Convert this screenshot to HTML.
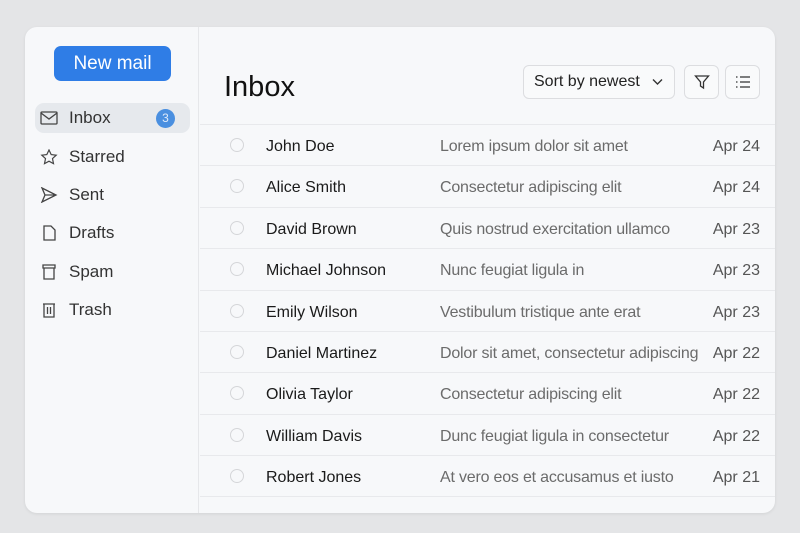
<!DOCTYPE html>
<html><head><meta charset="utf-8"><style>
*{margin:0;padding:0;box-sizing:border-box}
body{width:800px;height:533px;background:#e4e5e7;font-family:"Liberation Sans",sans-serif;position:relative;overflow:hidden}
.card{position:absolute;left:25px;top:27px;width:750px;height:486px;background:#f7f8fa;border-radius:12px;box-shadow:0 1px 3px rgba(0,0,0,.08);overflow:hidden}
.side{position:absolute;left:0;top:0;width:174px;height:486px;border-right:1px solid #e6e7ea}
.btn{position:absolute;left:29px;top:19px;width:117px;height:35px;background:#2f7de6;border-radius:7px;color:#fff;font-size:19px;text-align:center;line-height:35px}
.nav{position:absolute;left:10px;width:155px;height:30px;font-size:17px;color:#333;line-height:30px;padding-left:34px;border-radius:9px}
.nav svg{position:absolute;left:5px;top:7px}
.sel{background:#e6e9ed}
.badge{position:absolute;left:121px;top:6px;width:19px;height:19px;border-radius:50%;background:#4a8fe0;color:#dfeafa;font-size:12px;line-height:19px;text-align:center}
h1{position:absolute;left:199px;top:44px;font-weight:normal;font-size:29px;color:#111}
.sort{position:absolute;left:498px;top:38px;width:152px;height:34px;border:1px solid #dcdde0;border-radius:6px;font-size:16px;color:#222;line-height:32px;padding-left:10px;background:#f9fafb}
.ib{position:absolute;top:38px;width:35px;height:34px;border:1px solid #dcdde0;border-radius:6px;background:#f9fafb}
.row{position:absolute;left:175px;width:575px;height:41.4px;border-top:1px solid #e8e9ec;font-size:16px;line-height:44px}
.row i{position:absolute;left:30px;top:13px;width:14px;height:14px;border:1px solid #d5d6d9;border-radius:50%}
.n{position:absolute;left:66px;color:#1a1a1a}
.p{position:absolute;left:240px;color:#6b6b6b;letter-spacing:-0.2px}
.d{position:absolute;right:15px;color:#555}
</style></head><body><div class="card">
<div class="side">
<div class="btn">New mail</div>
<div class="nav sel" style="top:76px"><svg width="18" height="16" viewBox="0 0 18 16" fill="none" stroke="#444" stroke-width="1.3"><rect x="1" y="2" width="16" height="12" rx="1"/><path d="M1 3l8 6 8-6"/></svg>Inbox<span class="badge">3</span></div>
<div class="nav" style="top:115px"><svg width="18" height="16" viewBox="0 0 18 16" fill="none" stroke="#444" stroke-width="1.2"><path d="M9 1l2.2 4.6 5 .6-3.7 3.4 1 5L9 12.2 4.5 14.6l1-5L1.8 6.2l5-.6z"/></svg>Starred</div>
<div class="nav" style="top:153px"><svg width="18" height="16" viewBox="0 0 18 16" fill="none" stroke="#444" stroke-width="1.3"><path d="M2 1l14 7-14 7 3-7z M5 8h11"/></svg>Sent</div>
<div class="nav" style="top:191px"><svg width="18" height="16" viewBox="0 0 18 16" fill="none" stroke="#444" stroke-width="1.3"><path d="M4 1h7l4 4v10H4z"/></svg>Drafts</div>
<div class="nav" style="top:230px"><svg width="18" height="16" viewBox="0 0 18 16" fill="none" stroke="#444" stroke-width="1.3"><path d="M3 1h12v3H3z M4 4v11h10V4"/></svg>Spam</div>
<div class="nav" style="top:268px"><svg width="18" height="16" viewBox="0 0 18 16" fill="none" stroke="#444" stroke-width="1.3"><path d="M3 2h12 M4 2v13h10V2 M7.5 5v7 M10.5 5v7"/></svg>Trash</div>
</div>
<h1>Inbox</h1>
<div class="sort">Sort by newest<svg style="position:absolute;right:11px;top:12px" width="11" height="8" viewBox="0 0 11 8" fill="none" stroke="#333" stroke-width="1.4"><path d="M1 1.5l4.5 4.5 4.5-4.5"/></svg></div>
<div class="ib" style="left:659px"><svg style="position:absolute;left:9px;top:8px" width="16" height="16" viewBox="0 0 16 16" fill="none" stroke="#333" stroke-width="1.3"><path d="M1.5 2h13l-5 6v6l-3-2V8z"/></svg></div>
<div class="ib" style="left:700px"><svg style="position:absolute;left:9px;top:9px" width="16" height="14" viewBox="0 0 16 14" fill="none" stroke="#333" stroke-width="1.2"><path d="M1 2h1.5M1 7h1.5M1 12h1.5M5 2h10M5 7h10M5 12h10"/></svg></div>
<div class="row" style="top:97px"><i></i><span class="n">John Doe</span><span class="p">Lorem ipsum dolor sit amet</span><span class="d">Apr 24</span></div>
<div class="row" style="top:138.4px"><i></i><span class="n">Alice Smith</span><span class="p">Consectetur adipiscing elit</span><span class="d">Apr 24</span></div>
<div class="row" style="top:179.8px"><i></i><span class="n">David Brown</span><span class="p">Quis nostrud exercitation ullamco</span><span class="d">Apr 23</span></div>
<div class="row" style="top:221.2px"><i></i><span class="n">Michael Johnson</span><span class="p">Nunc feugiat ligula in</span><span class="d">Apr 23</span></div>
<div class="row" style="top:262.6px"><i></i><span class="n">Emily Wilson</span><span class="p">Vestibulum tristique ante erat</span><span class="d">Apr 23</span></div>
<div class="row" style="top:304px"><i></i><span class="n">Daniel Martinez</span><span class="p">Dolor sit amet, consectetur adipiscing</span><span class="d">Apr 22</span></div>
<div class="row" style="top:345.4px"><i></i><span class="n">Olivia Taylor</span><span class="p">Consectetur adipiscing elit</span><span class="d">Apr 22</span></div>
<div class="row" style="top:386.8px"><i></i><span class="n">William Davis</span><span class="p">Dunc feugiat ligula in consectetur</span><span class="d">Apr 22</span></div>
<div class="row" style="top:428.2px;border-bottom:1px solid #e8e9ec"><i></i><span class="n">Robert Jones</span><span class="p">At vero eos et accusamus et iusto</span><span class="d">Apr 21</span></div>
</div></body></html>
